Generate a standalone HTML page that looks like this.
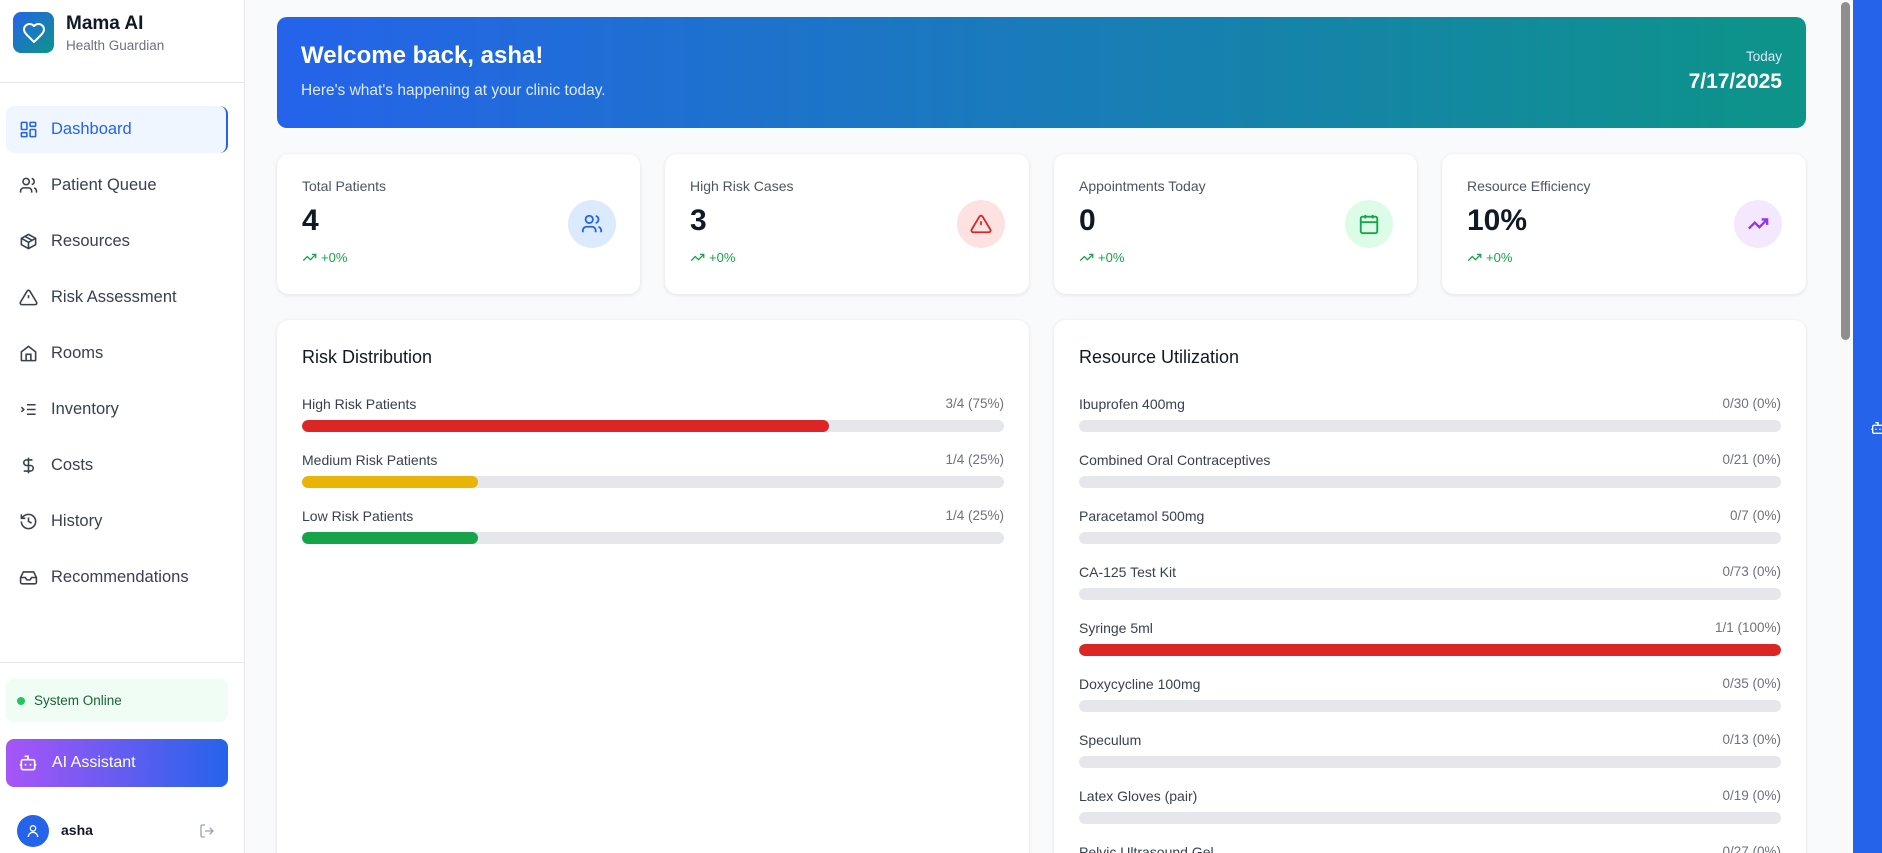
<!DOCTYPE html>
<html style="height:853px;overflow:hidden"><head><meta charset="utf-8"><style>
*{box-sizing:border-box;margin:0;padding:0}
body{width:1882px;height:853px;overflow:hidden;background:#f8fafc;font-family:"Liberation Sans",sans-serif;color:#111827;position:relative}
.abs{position:absolute}
.side{left:0;top:0;width:245px;height:853px;background:#fff;border-right:1px solid #e5e7eb}
.logo{left:13px;top:12px;width:41px;height:41px;border-radius:8px;background:linear-gradient(135deg,#2563eb,#0d9488);display:flex;align-items:center;justify-content:center}
.nav{left:6px;width:222px;height:47px;display:flex;align-items:center;padding-left:13px;font-size:16.5px;color:#374151}
.nav svg{margin-right:13px}
.nav.act{background:#eff6ff;color:#2563eb;border-radius:8px;border-right:2px solid #2563eb}
.card{background:#fff;border-radius:12px;box-shadow:0 1px 4px rgba(0,0,0,.1)}
.lbl{font-size:14px;color:#4b5563}
.num{font-size:30px;font-weight:bold;color:#111827}
.tr{font-size:13px;color:#16a34a;display:flex;align-items:center;gap:4px}
.ic{width:48px;height:48px;border-radius:50%;display:flex;align-items:center;justify-content:center}
.row{position:absolute;left:25px;right:25px;height:40px}
.row .t{position:absolute;left:0;top:-9px;font-size:14px;color:#374151}
.row .v{position:absolute;right:0;top:-9px;font-size:13.5px;color:#6b7280}
.row .b{position:absolute;left:0;right:0;top:15px;height:12px;border-radius:6px;background:#e5e7eb;overflow:hidden}
.row .b i{display:block;height:100%;border-radius:6px}
</style></head><body>
<div class="abs side">
 <div class="abs logo"><svg width="24" height="24" viewBox="0 0 24 24" fill="none" stroke="#fff" stroke-width="2" stroke-linejoin="round"><path d="M19 14c1.5-1.5 3-3.2 3-5.5A5.5 5.5 0 0 0 16.5 3c-1.8 0-3 .5-4.5 2-1.5-1.5-2.7-2-4.5-2A5.5 5.5 0 0 0 2 8.5c0 2.3 1.5 4 3 5.5l7 7Z"/></svg></div>
 <div class="abs" style="left:66px;top:13px;font-size:19px;font-weight:bold">Mama AI</div>
 <div class="abs" style="left:66px;top:38px;font-size:13.5px;color:#6b7280">Health Guardian</div>
 <div class="abs" style="left:0;top:82px;width:244px;border-top:1px solid #e5e7eb"></div>
 <div class="abs nav act" style="top:106px"><svg width="19" height="19" viewBox="0 0 24 24" fill="none" stroke="currentColor" stroke-width="2"><rect x="3" y="3" width="7" height="9" rx="1"/><rect x="14" y="3" width="7" height="5" rx="1"/><rect x="14" y="12" width="7" height="9" rx="1"/><rect x="3" y="16" width="7" height="5" rx="1"/></svg>Dashboard</div>
 <div class="abs nav" style="top:162px"><svg width="19" height="19" viewBox="0 0 24 24" fill="none" stroke="currentColor" stroke-width="2"><path d="M16 21v-2a4 4 0 0 0-4-4H6a4 4 0 0 0-4 4v2"/><circle cx="9" cy="7" r="4"/><path d="M22 21v-2a4 4 0 0 0-3-3.9M16 3.1a4 4 0 0 1 0 7.8"/></svg>Patient Queue</div>
 <div class="abs nav" style="top:218px"><svg width="19" height="19" viewBox="0 0 24 24" fill="none" stroke="currentColor" stroke-width="2"><path d="M21 8 12 3 3 8v8l9 5 9-5Z"/><path d="M3 8l9 5 9-5M12 13v8M7.5 5.5l9 5"/></svg>Resources</div>
 <div class="abs nav" style="top:274px"><svg width="19" height="19" viewBox="0 0 24 24" fill="none" stroke="currentColor" stroke-width="2"><path d="M10.3 3.9 1.8 18a2 2 0 0 0 1.7 3h17a2 2 0 0 0 1.7-3L13.7 3.9a2 2 0 0 0-3.4 0Z"/><path d="M12 9v4M12 17h.01"/></svg>Risk Assessment</div>
 <div class="abs nav" style="top:330px"><svg width="19" height="19" viewBox="0 0 24 24" fill="none" stroke="currentColor" stroke-width="2"><path d="M3 10 12 3l9 7v10a1 1 0 0 1-1 1H4a1 1 0 0 1-1-1Z"/><path d="M9 21v-8h6v8"/></svg>Rooms</div>
 <div class="abs nav" style="top:386px"><svg width="19" height="19" viewBox="0 0 24 24" fill="none" stroke="currentColor" stroke-width="2"><path d="m3 9 3 3-3 3M10 6h11M10 12h11M10 18h11"/></svg>Inventory</div>
 <div class="abs nav" style="top:442px"><svg width="19" height="19" viewBox="0 0 24 24" fill="none" stroke="currentColor" stroke-width="2"><path d="M12 2v20M17 5H9.5a3.5 3.5 0 0 0 0 7h5a3.5 3.5 0 0 1 0 7H6"/></svg>Costs</div>
 <div class="abs nav" style="top:498px"><svg width="19" height="19" viewBox="0 0 24 24" fill="none" stroke="currentColor" stroke-width="2"><path d="M3 12a9 9 0 1 0 9-9 9.8 9.8 0 0 0-6.7 2.7L3 8"/><path d="M3 3v5h5M12 7v5l4 2"/></svg>History</div>
 <div class="abs nav" style="top:554px"><svg width="19" height="19" viewBox="0 0 24 24" fill="none" stroke="currentColor" stroke-width="2"><path d="M22 12h-6l-2 3h-4l-2-3H2"/><path d="M5.5 5h13L22 12v6a2 2 0 0 1-2 2H4a2 2 0 0 1-2-2v-6Z"/></svg>Recommendations</div>
 <div class="abs" style="left:0;top:662px;width:244px;border-top:1px solid #e5e7eb"></div>
 <div class="abs" style="left:6px;top:679px;width:222px;height:43px;background:#f0fdf4;border-radius:8px;display:flex;align-items:center;padding-left:11px;font-size:13.5px;color:#166534"><span style="width:8px;height:8px;border-radius:50%;background:#22c55e;margin-right:9px"></span>System Online</div>
 <div class="abs" style="left:6px;top:739px;width:222px;height:48px;background:linear-gradient(90deg,#a855f7,#2563eb);border-radius:8px;display:flex;align-items:center;padding-left:12px;font-size:16px;color:#fff"><svg width="20" height="20" viewBox="0 0 24 24" fill="none" stroke="#fff" stroke-width="2" style="margin-right:14px"><path d="M12 8V4H8"/><rect x="4" y="8" width="16" height="12" rx="2"/><path d="M2 14h2M20 14h2M15 13v2M9 13v2"/></svg>AI Assistant</div>
 <div class="abs" style="left:17px;top:815px;width:32px;height:32px;border-radius:50%;background:#2563eb;display:flex;align-items:center;justify-content:center"><svg width="16" height="16" viewBox="0 0 24 24" fill="none" stroke="#fff" stroke-width="2"><circle cx="12" cy="8" r="4"/><path d="M5 21a7 7 0 0 1 14 0"/></svg></div>
 <div class="abs" style="left:61px;top:822px;font-size:14px;font-weight:bold;color:#111827">asha</div>
 <svg class="abs" style="left:199px;top:823px" width="16" height="16" viewBox="0 0 24 24" fill="none" stroke="#9ca3af" stroke-width="2"><path d="M9 21H5a2 2 0 0 1-2-2V5a2 2 0 0 1 2-2h4M16 17l5-5-5-5M21 12H9"/></svg>
</div>

<div class="abs" style="left:277px;top:17px;width:1529px;height:111px;border-radius:10px;background:linear-gradient(90deg,#2563eb,#0d9488);color:#fff">
 <div class="abs" style="left:24px;top:25px;font-size:24px;font-weight:bold">Welcome back, asha!</div>
 <div class="abs" style="left:24px;top:65px;font-size:15.5px;color:#dbeafe">Here's what's happening at your clinic today.</div>
 <div class="abs" style="right:24px;top:32px;font-size:13.5px;color:#dbeafe">Today</div>
 <div class="abs" style="right:24px;top:53px;font-size:21px;font-weight:bold">7/17/2025</div>
</div>

<div class="abs card" style="left:277px;top:154px;width:363px;height:140px">
 <div class="abs lbl" style="left:25px;top:24px">Total Patients</div><div class="abs num" style="left:25px;top:50px">4</div>
 <div class="abs tr" style="left:25px;top:96px"><svg width="15" height="15" viewBox="0 0 24 24" fill="none" stroke="#16a34a" stroke-width="2"><path d="m22 7-8.5 8.5-5-5L2 17M16 7h6v6"/></svg>+0%</div>
 <div class="abs ic" style="right:24px;top:46px;background:#dbeafe"><svg width="22" height="22" viewBox="0 0 24 24" fill="none" stroke="#2563eb" stroke-width="2"><path d="M16 21v-2a4 4 0 0 0-4-4H6a4 4 0 0 0-4 4v2"/><circle cx="9" cy="7" r="4"/><path d="M22 21v-2a4 4 0 0 0-3-3.9M16 3.1a4 4 0 0 1 0 7.8"/></svg></div>
</div>
<div class="abs card" style="left:665px;top:154px;width:364px;height:140px">
 <div class="abs lbl" style="left:25px;top:24px">High Risk Cases</div><div class="abs num" style="left:25px;top:50px">3</div>
 <div class="abs tr" style="left:25px;top:96px"><svg width="15" height="15" viewBox="0 0 24 24" fill="none" stroke="#16a34a" stroke-width="2"><path d="m22 7-8.5 8.5-5-5L2 17M16 7h6v6"/></svg>+0%</div>
 <div class="abs ic" style="right:24px;top:46px;background:#fee2e2"><svg width="22" height="22" viewBox="0 0 24 24" fill="none" stroke="#dc2626" stroke-width="2"><path d="M10.3 3.9 1.8 18a2 2 0 0 0 1.7 3h17a2 2 0 0 0 1.7-3L13.7 3.9a2 2 0 0 0-3.4 0Z"/><path d="M12 9v4M12 17h.01"/></svg></div>
</div>
<div class="abs card" style="left:1054px;top:154px;width:363px;height:140px">
 <div class="abs lbl" style="left:25px;top:24px">Appointments Today</div><div class="abs num" style="left:25px;top:50px">0</div>
 <div class="abs tr" style="left:25px;top:96px"><svg width="15" height="15" viewBox="0 0 24 24" fill="none" stroke="#16a34a" stroke-width="2"><path d="m22 7-8.5 8.5-5-5L2 17M16 7h6v6"/></svg>+0%</div>
 <div class="abs ic" style="right:24px;top:46px;background:#dcfce7"><svg width="22" height="22" viewBox="0 0 24 24" fill="none" stroke="#16a34a" stroke-width="2"><rect x="3" y="4" width="18" height="18" rx="2"/><path d="M16 2v4M8 2v4M3 10h18"/></svg></div>
</div>
<div class="abs card" style="left:1442px;top:154px;width:364px;height:140px">
 <div class="abs lbl" style="left:25px;top:24px">Resource Efficiency</div><div class="abs num" style="left:25px;top:50px">10%</div>
 <div class="abs tr" style="left:25px;top:96px"><svg width="15" height="15" viewBox="0 0 24 24" fill="none" stroke="#16a34a" stroke-width="2"><path d="m22 7-8.5 8.5-5-5L2 17M16 7h6v6"/></svg>+0%</div>
 <div class="abs ic" style="right:24px;top:46px;background:#f3e8ff"><svg width="22" height="22" viewBox="0 0 24 24" fill="none" stroke="#9333ea" stroke-width="2.5"><path d="m22 7-8.5 8.5-5-5L2 17M16 7h6v6"/></svg></div>
</div>

<div class="abs card" style="left:277px;top:320px;width:752px;height:560px;overflow:hidden">
 <div class="abs" style="left:25px;top:27px;font-size:18px;color:#111827">Risk Distribution</div>
 <div class="row" style="top:85px"><span class="t">High Risk Patients</span><span class="v">3/4 (75%)</span><div class="b"><i style="width:75%;background:#dc2626"></i></div></div>
 <div class="row" style="top:141px"><span class="t">Medium Risk Patients</span><span class="v">1/4 (25%)</span><div class="b"><i style="width:25%;background:#eab308"></i></div></div>
 <div class="row" style="top:197px"><span class="t">Low Risk Patients</span><span class="v">1/4 (25%)</span><div class="b"><i style="width:25%;background:#16a34a"></i></div></div>
</div>

<div class="abs card" style="left:1054px;top:320px;width:752px;height:560px;overflow:hidden">
 <div class="abs" style="left:25px;top:27px;font-size:18px;color:#111827">Resource Utilization</div>
 <div class="row" style="top:85px"><span class="t">Ibuprofen 400mg</span><span class="v">0/30 (0%)</span><div class="b"></div></div>
 <div class="row" style="top:141px"><span class="t">Combined Oral Contraceptives</span><span class="v">0/21 (0%)</span><div class="b"></div></div>
 <div class="row" style="top:197px"><span class="t">Paracetamol 500mg</span><span class="v">0/7 (0%)</span><div class="b"></div></div>
 <div class="row" style="top:253px"><span class="t">CA-125 Test Kit</span><span class="v">0/73 (0%)</span><div class="b"></div></div>
 <div class="row" style="top:309px"><span class="t">Syringe 5ml</span><span class="v">1/1 (100%)</span><div class="b"><i style="width:100%;background:#dc2626"></i></div></div>
 <div class="row" style="top:365px"><span class="t">Doxycycline 100mg</span><span class="v">0/35 (0%)</span><div class="b"></div></div>
 <div class="row" style="top:421px"><span class="t">Speculum</span><span class="v">0/13 (0%)</span><div class="b"></div></div>
 <div class="row" style="top:477px"><span class="t">Latex Gloves (pair)</span><span class="v">0/19 (0%)</span><div class="b"></div></div>
 <div class="row" style="top:533px"><span class="t">Pelvic Ultrasound Gel</span><span class="v">0/27 (0%)</span><div class="b"></div></div>
</div>

<div class="abs" style="left:1838px;top:0;width:15px;height:853px;background:#f9f9f9"></div>
<div class="abs" style="left:1841px;top:2px;width:9px;height:338px;border-radius:5px;background:#8f8f8f"></div>
<div class="abs" style="left:1853px;top:0;width:29px;height:853px;background:#2563eb"></div>
<svg class="abs" style="left:1870px;top:420px" width="16" height="16" viewBox="0 0 24 24" fill="none" stroke="#fff" stroke-width="2"><path d="M12 8V4H8"/><rect x="4" y="8" width="16" height="12" rx="2"/><path d="M2 14h2M15 13v2M9 13v2"/></svg>
</body></html>
